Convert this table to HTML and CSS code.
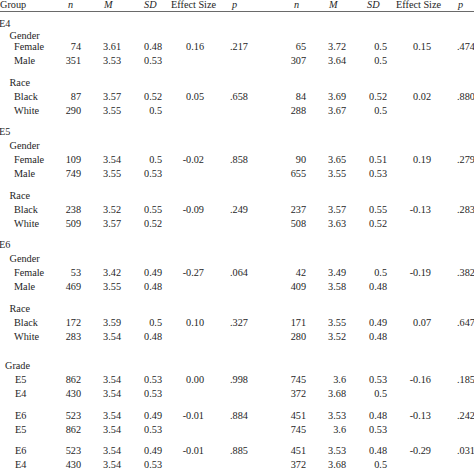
FILE: index.html
```html
<!DOCTYPE html>
<html>
<head>
<meta charset="utf-8">
<link rel="stylesheet" href="styles.css">
</head>
<body>
<div class="table">
  <div class="row head">
    <div>Group</div><div><i>n</i></div><div><i>M</i></div><div><i>SD</i></div><div>Effect Size</div><div><i>p</i></div>
    <div><i>n</i></div><div><i>M</i></div><div><i>SD</i></div><div>Effect Size</div><div><i>p</i></div>
  </div>

  <div class="row label first t12"><div class="l0">E4</div></div>
  <div class="row label t115"><div class="l1">Gender</div></div>
  <div class="row"><div class="l2">Female</div><div>74</div><div>3.61</div><div>0.48</div><div>0.16</div><div>.217</div><div>65</div><div>3.72</div><div>0.5</div><div>0.15</div><div>.474</div></div>
  <div class="row"><div class="l2">Male</div><div>351</div><div>3.53</div><div>0.53</div><div></div><div></div><div>307</div><div>3.64</div><div>0.5</div><div></div><div></div></div>
  <div class="row label gap"><div class="l1">Race</div></div>
  <div class="row"><div class="l2">Black</div><div>87</div><div>3.57</div><div>0.52</div><div>0.05</div><div>.658</div><div>84</div><div>3.69</div><div>0.52</div><div>0.02</div><div>.880</div></div>
  <div class="row"><div class="l2">White</div><div>290</div><div>3.55</div><div>0.5</div><div></div><div></div><div>288</div><div>3.67</div><div>0.5</div><div></div><div></div></div>

  <div class="row label gap"><div class="l0">E5</div></div>
  <div class="row label"><div class="l1">Gender</div></div>
  <div class="row"><div class="l2">Female</div><div>109</div><div>3.54</div><div>0.5</div><div>-0.02</div><div>.858</div><div>90</div><div>3.65</div><div>0.51</div><div>0.19</div><div>.279</div></div>
  <div class="row"><div class="l2">Male</div><div>749</div><div>3.55</div><div>0.53</div><div></div><div></div><div>655</div><div>3.55</div><div>0.53</div><div></div><div></div></div>
  <div class="row label gap"><div class="l1">Race</div></div>
  <div class="row"><div class="l2">Black</div><div>238</div><div>3.52</div><div>0.55</div><div>-0.09</div><div>.249</div><div>237</div><div>3.57</div><div>0.55</div><div>-0.13</div><div>.283</div></div>
  <div class="row"><div class="l2">White</div><div>509</div><div>3.57</div><div>0.52</div><div></div><div></div><div>508</div><div>3.63</div><div>0.52</div><div></div><div></div></div>

  <div class="row label gap"><div class="l0">E6</div></div>
  <div class="row label"><div class="l1">Gender</div></div>
  <div class="row"><div class="l2">Female</div><div>53</div><div>3.42</div><div>0.49</div><div>-0.27</div><div>.064</div><div>42</div><div>3.49</div><div>0.5</div><div>-0.19</div><div>.382</div></div>
  <div class="row"><div class="l2">Male</div><div>469</div><div>3.55</div><div>0.48</div><div></div><div></div><div>409</div><div>3.58</div><div>0.48</div><div></div><div></div></div>
  <div class="row label gap"><div class="l1">Race</div></div>
  <div class="row"><div class="l2">Black</div><div>172</div><div>3.59</div><div>0.5</div><div>0.10</div><div>.327</div><div>171</div><div>3.55</div><div>0.49</div><div>0.07</div><div>.647</div></div>
  <div class="row"><div class="l2">White</div><div>283</div><div>3.54</div><div>0.48</div><div></div><div></div><div>280</div><div>3.52</div><div>0.48</div><div></div><div></div></div>

  <div class="row label biggap"><div class="lg">Grade</div></div>
  <div class="row"><div class="lgi">E5</div><div>862</div><div>3.54</div><div>0.53</div><div>0.00</div><div>.998</div><div>745</div><div>3.6</div><div>0.53</div><div>-0.16</div><div>.185</div></div>
  <div class="row"><div class="lgi">E4</div><div>430</div><div>3.54</div><div>0.53</div><div></div><div></div><div>372</div><div>3.68</div><div>0.5</div><div></div><div></div></div>
  <div class="row gap"><div class="lgi">E6</div><div>523</div><div>3.54</div><div>0.49</div><div>-0.01</div><div>.884</div><div>451</div><div>3.53</div><div>0.48</div><div>-0.13</div><div>.242</div></div>
  <div class="row"><div class="lgi">E5</div><div>862</div><div>3.54</div><div>0.53</div><div></div><div></div><div>745</div><div>3.6</div><div>0.53</div><div></div><div></div></div>
  <div class="row gap"><div class="lgi">E6</div><div>523</div><div>3.54</div><div>0.49</div><div>-0.01</div><div>.885</div><div>451</div><div>3.53</div><div>0.48</div><div>-0.29</div><div>.031</div></div>
  <div class="row"><div class="lgi">E4</div><div>430</div><div>3.54</div><div>0.53</div><div></div><div></div><div>372</div><div>3.68</div><div>0.5</div><div></div><div></div></div>
</div>
</body>
</html>
```

FILE: styles.css
```css
html, body {
  margin: 0;
  padding: 0;
  background: #ffffff;
  overflow: hidden;
}
body {
  width: 474px;
  height: 470px;
  font-family: "Liberation Serif", "Times New Roman", serif;
  font-size: 10.25px;
  color: #1e1e1e;
}
.table {
  display: flex;
  flex-direction: column;
  width: 474px;
}
.row {
  display: grid;
  grid-template-columns: 60px 21px 40px 41px 42px 45px 57px 40px 41px 44px 43px;
  height: 14px;
  line-height: 14px;
  white-space: nowrap;
}
.row > div { text-align: right; }
.row > div:nth-child(1) { text-align: left; }
.row > div:nth-child(6),
.row > div:nth-child(11) { text-align: left; padding-left: 26px; }

.head {
  height: 9px;
  line-height: 9px;
  padding-bottom: 2px;
  border-bottom: 1px solid #6a6a6a;
}
.head > div { text-align: left; }
.head > div:nth-child(2) { padding-left: 8px; }
.head > div:nth-child(3) { padding-left: 23px; }
.head > div:nth-child(4) { padding-left: 23px; }
.head > div:nth-child(5) { padding-left: 9px; }
.head > div:nth-child(6) { padding-left: 28px; }
.head > div:nth-child(7) { padding-left: 45px; }
.head > div:nth-child(8) { padding-left: 23px; }
.head > div:nth-child(9) { padding-left: 21px; }
.head > div:nth-child(10) { padding-left: 9px; }
.head > div:nth-child(11) { padding-left: 27px; }
.head i { font-style: italic; }

.label > div { grid-column: 1 / -1; }
.first { margin-top: 4.5px; }
.t12 { height: 12px; }
.t115 { height: 11.5px; }
.gap { margin-top: 7.5px; }
.biggap { margin-top: 15.5px; }

.l0 { padding-left: 0; margin-left: -1px; }
.l1 { padding-left: 9.5px; }
.l2 { padding-left: 14px; }
.lg { padding-left: 5px; }
.lgi { padding-left: 15px; }
```
